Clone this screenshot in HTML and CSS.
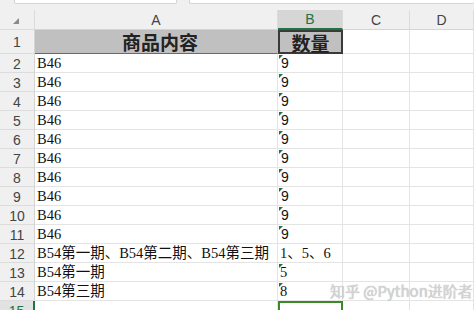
FILE: index.html
```html
<!DOCTYPE html>
<html>
<head>
<meta charset="utf-8">
<link rel="stylesheet" href="styles.css">
</head>
<body>
<div class="page">
  <div class="topbar">
    <div class="box box-name"></div>
    <div class="box box-formula"></div>
  </div>
  <div class="sheet">
    <div class="corner"><svg width="6" height="6" viewBox="0 0 6 6"><polygon points="6,0 6,6 0,6" fill="#8a8a8a"/></svg></div>
    <div class="colhead">A</div>
    <div class="colhead colhead-sel">B</div>
    <div class="colhead">C</div>
    <div class="colhead">D</div>

    <div class="rowhead">1</div>
    <div class="cell title">商品内容</div>
    <div class="cell title title-b">数量</div>
    <div class="cell"></div>
    <div class="cell"></div>

    <div class="rowhead">2</div><div class="cell txt">B46</div><div class="cell num flag">9</div><div class="cell"></div><div class="cell"></div>
    <div class="rowhead">3</div><div class="cell txt">B46</div><div class="cell num flag">9</div><div class="cell"></div><div class="cell"></div>
    <div class="rowhead">4</div><div class="cell txt">B46</div><div class="cell num flag">9</div><div class="cell"></div><div class="cell"></div>
    <div class="rowhead">5</div><div class="cell txt">B46</div><div class="cell num flag">9</div><div class="cell"></div><div class="cell"></div>
    <div class="rowhead">6</div><div class="cell txt">B46</div><div class="cell num flag">9</div><div class="cell"></div><div class="cell"></div>
    <div class="rowhead">7</div><div class="cell txt">B46</div><div class="cell num flag">9</div><div class="cell"></div><div class="cell"></div>
    <div class="rowhead">8</div><div class="cell txt">B46</div><div class="cell num flag">9</div><div class="cell"></div><div class="cell"></div>
    <div class="rowhead">9</div><div class="cell txt">B46</div><div class="cell num flag">9</div><div class="cell"></div><div class="cell"></div>
    <div class="rowhead">10</div><div class="cell txt">B46</div><div class="cell num flag">9</div><div class="cell"></div><div class="cell"></div>
    <div class="rowhead">11</div><div class="cell txt">B46</div><div class="cell num flag">9</div><div class="cell"></div><div class="cell"></div>
    <div class="rowhead">12</div><div class="cell txt">B54第一期、B54第二期、B54第三期</div><div class="cell txt overflow">1、5、6</div><div class="cell"></div><div class="cell"></div>
    <div class="rowhead">13</div><div class="cell txt">B54第一期</div><div class="cell txt flag">5</div><div class="cell"></div><div class="cell"></div>
    <div class="rowhead">14</div><div class="cell txt">B54第三期</div><div class="cell txt flag">8</div><div class="cell"></div><div class="cell"></div>
    <div class="rowhead rowhead-sel">15</div><div class="cell"></div><div class="cell selected"></div><div class="cell"></div><div class="cell"></div>
  </div>
  <div class="watermark">知乎 @Python进阶者</div>
</div>
</body>
</html>
```
FILE: styles.css
```css
html, body {
  margin: 0;
  padding: 0;
  background: #ffffff;
}
.page {
  position: relative;
  width: 474px;
  height: 310px;
  overflow: hidden;
  background: #f0f0f0;
}
.topbar {
  height: 10px;
  display: flex;
  align-items: flex-start;
  background: #f0f0f0;
}
.box {
  height: 3px;
  background: #ffffff;
  border: 1px solid #d4d4d4;
  border-top: none;
  border-radius: 0 0 2px 2px;
}
.box-name {
  margin-left: 14px;
  width: 161px;
}
.box-formula {
  margin-left: 12px;
  flex: 1;
  border-right: none;
}
.sheet {
  display: grid;
  grid-template-columns: 35px 243px 65px 67px 64px;
  grid-template-rows: 20px 24px repeat(13, 19px) 19px;
  background: #ffffff;
}
.corner {
  background: #f0f0f0;
  border-right: 1px solid #dcdcdc;
  border-bottom: 1px solid #dcdcdc;
  display: flex;
  align-items: center;
  justify-content: center;
  padding: 2px 0 0 0;
  box-sizing: border-box;
}
.corner svg {
  margin-right: 2px;
}
.colhead {
  background: #f0f0f0;
  border-right: 1px solid #dcdcdc;
  border-bottom: 1px solid #d4d4d4;
  box-sizing: border-box;
  display: flex;
  align-items: center;
  justify-content: center;
  font-family: "Liberation Sans", "DejaVu Sans", sans-serif;
  font-size: 14px;
  color: #444444;
}
.colhead-sel {
  background: #d6d6d6;
  color: #217346;
  border-bottom: 2px solid #217346;
}
.rowhead {
  background: #f0f0f0;
  border-bottom: 1px solid #dcdcdc;
  border-right: 1px solid #d4d4d4;
  box-sizing: border-box;
  display: flex;
  align-items: center;
  justify-content: center;
  font-family: "Liberation Sans", "DejaVu Sans", sans-serif;
  font-size: 14px;
  color: #444444;
  padding-top: 1px;
}
.rowhead-sel {
  border-right: 2px solid #217346;
  color: #217346;
  background: #e2e2e2;
}
.cell {
  position: relative;
  border-right: 1px solid #e4e4e4;
  border-bottom: 1px solid #e4e4e4;
  box-sizing: border-box;
  white-space: nowrap;
  display: flex;
  align-items: flex-end;
  padding: 0 0 0 2px;
}
.title {
  background: #c0c0c0;
  border-right: 1px solid #c0c0c0;
  border-bottom: 1px solid #6a6a6a;
  justify-content: center;
  align-items: center;
  font-family: "Noto Sans CJK SC", sans-serif;
  font-weight: bold;
  font-size: 19px;
  color: #222222;
  padding: 0 0 0 8px;
}
.title-b {
  border: 2px solid #3a3a3a;
  padding: 0;
}
.txt {
  font-family: "Liberation Serif", "Noto Sans CJK SC", serif;
  font-size: 14.5px;
  line-height: 18px;
  color: #111111;
}
.num {
  font-family: "Liberation Sans", "DejaVu Sans", sans-serif;
  font-size: 14px;
  line-height: 18px;
  color: #111111;
  padding-left: 3px;
}
.overflow {
  overflow: visible;
}
.flag::before {
  content: "";
  position: absolute;
  left: 1px;
  top: 1px;
  width: 0;
  height: 0;
  border-top: 4px solid #1e7145;
  border-right: 4px solid transparent;
}
.selected {
  border: 2px solid #3a8a2a;
}
.watermark {
  position: absolute;
  left: 330px;
  top: 280px;
  font-family: "Noto Sans CJK SC", "Noto Sans", sans-serif;
  font-size: 15px;
  color: #d4d4d4;
  text-shadow: 0 0 1px #b0b0b0;
  white-space: nowrap;
}
```
